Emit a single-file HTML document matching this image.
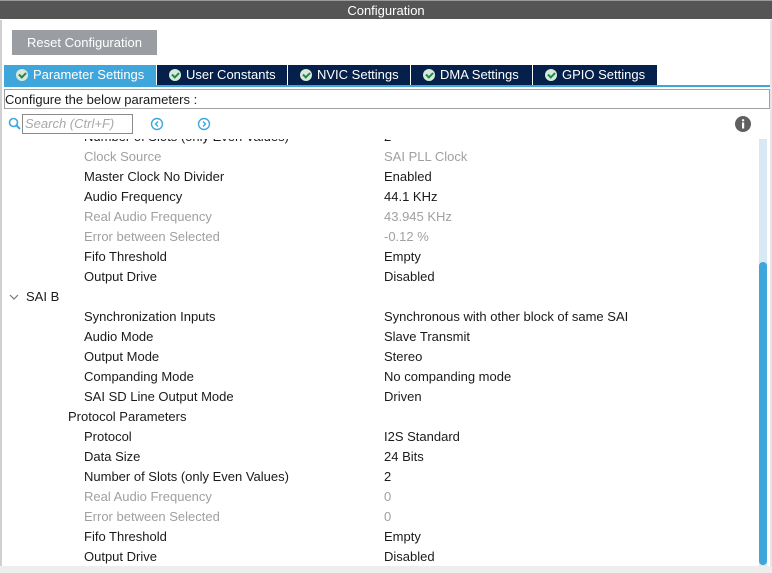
<!DOCTYPE html>
<html style="width:772px;height:573px;overflow:hidden"><head><style>
*{margin:0;padding:0;box-sizing:border-box}
body{width:772px;height:573px;background:#fff;font-family:"Liberation Sans",sans-serif;font-size:13px;color:#1a1a1a;position:relative;overflow:hidden}
.a{position:absolute}
.title{left:0;top:0;width:772px;height:19px;background:#545554;color:#fff;text-align:center;line-height:20px;font-size:13px;border-top:1px solid #9a9a9a}
.btn{left:12px;top:30px;width:145px;height:25px;background:#9a9ea3;color:#fff;text-align:center;line-height:26px}
.tab{top:65px;height:20px;background:#05204a;color:#fff;line-height:20px;padding-left:29px}
.tab i{position:absolute;left:12px;top:4px;width:12px;height:12px;border-radius:50%;background:#d8e9da}
.tab i:after{content:"";position:absolute;left:3px;top:2.5px;width:5px;height:3px;border-left:2px solid #1f8a4a;border-bottom:2px solid #1f8a4a;transform:rotate(-45deg)}
.row{position:absolute;height:20px;line-height:20px;white-space:nowrap}
.g{color:#a0a0a0}
</style></head><body>
<div class="a title">Configuration</div>
<div class="a btn">Reset Configuration</div>
<div class="a tab" style="left:4px;width:152px;background:#3ea6db"><i></i>Parameter Settings</div>
<div class="a tab" style="left:157px;width:130px"><i></i>User Constants</div>
<div class="a tab" style="left:288px;width:122px"><i></i>NVIC Settings</div>
<div class="a tab" style="left:411px;width:121px"><i></i>DMA Settings</div>
<div class="a tab" style="left:533px;width:124px"><i></i>GPIO Settings</div>
<div class="a" style="left:4px;top:85px;width:766px;height:2px;background:#3ea6db"></div>
<div class="a" style="left:0;top:20px;width:2px;height:553px;background:#d0d0d0"></div>
<div class="a" style="left:770px;top:20px;width:2px;height:553px;background:#e6e6e6"></div>
<div class="a" style="left:0;top:566px;width:772px;height:7px;background:#eeeeee"></div>
<div class="a" style="left:4px;top:89px;width:766px;height:20px;border:1px solid #a0a0a0;line-height:19px">Configure the below parameters :</div>

<div class="a" style="left:0;top:139px;width:758px;height:427px;overflow:hidden">
<div style="position:relative;top:-12px">
<div class="row" style="left:84px;top:0">Number of Slots (only Even Values)</div><div class="row" style="left:384px;top:0">2</div>
<div class="row g" style="left:84px;top:20px">Clock Source</div><div class="row g" style="left:384px;top:20px">SAI PLL Clock</div>
<div class="row" style="left:84px;top:40px">Master Clock No Divider</div><div class="row" style="left:384px;top:40px">Enabled</div>
<div class="row" style="left:84px;top:60px">Audio Frequency</div><div class="row" style="left:384px;top:60px">44.1 KHz</div>
<div class="row g" style="left:84px;top:80px">Real Audio Frequency</div><div class="row g" style="left:384px;top:80px">43.945 KHz</div>
<div class="row g" style="left:84px;top:100px">Error between Selected</div><div class="row g" style="left:384px;top:100px">-0.12 %</div>
<div class="row" style="left:84px;top:120px">Fifo Threshold</div><div class="row" style="left:384px;top:120px">Empty</div>
<div class="row" style="left:84px;top:140px">Output Drive</div><div class="row" style="left:384px;top:140px">Disabled</div>
<svg class="a" style="left:9px;top:166px" width="10" height="8"><path d="M1 2 L5 6 L9 2" fill="none" stroke="#777" stroke-width="1.2"/></svg>
<div class="row" style="left:26px;top:160px">SAI B</div>
<div class="row" style="left:84px;top:180px">Synchronization Inputs</div><div class="row" style="left:384px;top:180px">Synchronous with other block of same SAI</div>
<div class="row" style="left:84px;top:200px">Audio Mode</div><div class="row" style="left:384px;top:200px">Slave Transmit</div>
<div class="row" style="left:84px;top:220px">Output Mode</div><div class="row" style="left:384px;top:220px">Stereo</div>
<div class="row" style="left:84px;top:240px">Companding Mode</div><div class="row" style="left:384px;top:240px">No companding mode</div>
<div class="row" style="left:84px;top:260px">SAI SD Line Output Mode</div><div class="row" style="left:384px;top:260px">Driven</div>
<div class="row" style="left:68px;top:280px">Protocol Parameters</div>
<div class="row" style="left:84px;top:300px">Protocol</div><div class="row" style="left:384px;top:300px">I2S Standard</div>
<div class="row" style="left:84px;top:320px">Data Size</div><div class="row" style="left:384px;top:320px">24 Bits</div>
<div class="row" style="left:84px;top:340px">Number of Slots (only Even Values)</div><div class="row" style="left:384px;top:340px">2</div>
<div class="row g" style="left:84px;top:360px">Real Audio Frequency</div><div class="row g" style="left:384px;top:360px">0</div>
<div class="row g" style="left:84px;top:380px">Error between Selected</div><div class="row g" style="left:384px;top:380px">0</div>
<div class="row" style="left:84px;top:400px">Fifo Threshold</div><div class="row" style="left:384px;top:400px">Empty</div>
<div class="row" style="left:84px;top:420px">Output Drive</div><div class="row" style="left:384px;top:420px">Disabled</div>
</div></div>

<svg class="a" style="left:8px;top:117px" width="14" height="14"><circle cx="5.5" cy="5.5" r="4" fill="none" stroke="#3ea6db" stroke-width="1.6"/><path d="M8.5 8.5 L12 12" stroke="#3ea6db" stroke-width="2"/></svg>
<div class="a" style="left:22px;top:114px;width:111px;height:20px;border:1px solid #8a8a8a;color:#a8a8a8;font-style:italic;line-height:18px;padding-left:2px">Search (Ctrl+F)</div>
<svg class="a" style="left:150px;top:117px" width="14" height="14"><circle cx="7" cy="7" r="5.5" fill="none" stroke="#3ea6db" stroke-width="1.4"/><path d="M8 4.5 L5.5 7 L8 9.5" fill="none" stroke="#3ea6db" stroke-width="1.4"/></svg>
<svg class="a" style="left:197px;top:117px" width="14" height="14"><circle cx="7" cy="7" r="5.5" fill="none" stroke="#3ea6db" stroke-width="1.4"/><path d="M6 4.5 L8.5 7 L6 9.5" fill="none" stroke="#3ea6db" stroke-width="1.4"/></svg>
<svg class="a" style="left:735px;top:116px" width="16" height="16"><circle cx="8" cy="8" r="8" fill="#606060"/><rect x="7" y="6.5" width="2.2" height="6" fill="#fff"/><circle cx="8.1" cy="4.3" r="1.2" fill="#fff"/></svg>

<div class="a" style="left:759px;top:139px;width:8px;height:427px;background:#d8e8f5"></div>
<div class="a" style="left:759px;top:262px;width:8px;height:303px;background:#3ea6db;border-radius:4px"></div>
</body></html>
